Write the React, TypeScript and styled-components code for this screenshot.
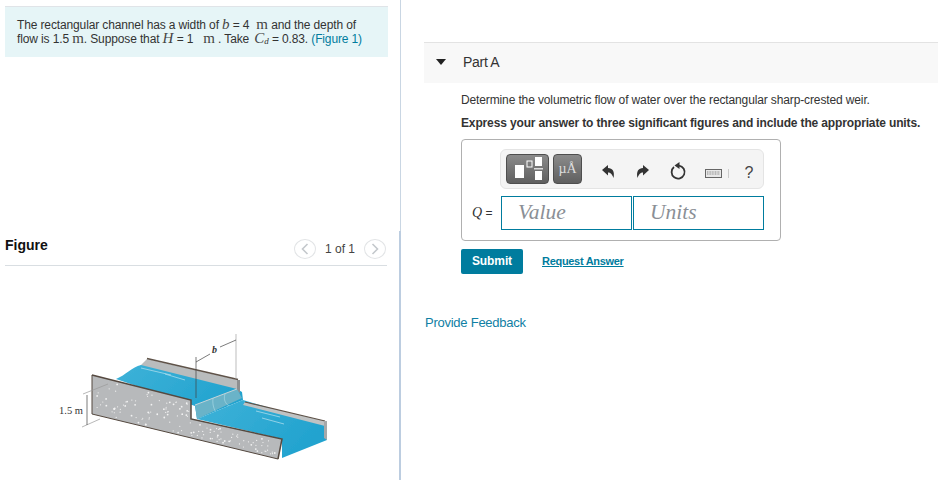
import React from "react";
import styled, { createGlobalStyle } from "styled-components";

const Global = createGlobalStyle`
  html, body { margin: 0; padding: 0; background: #fff; }
  body { font-family: "Liberation Sans", Arial, sans-serif; color: #333; overflow: hidden; }
`;
const Page = styled.div`display: flex; width: 938px; height: 480px; overflow: hidden;`;
const Left = styled.div`
  width: 399px; height: 480px; box-sizing: border-box; flex: none;
  padding: 6px 11px 0 5px;
`;
const Divider = styled.div`width: 2px; height: 480px; flex: none; display: flex; flex-direction: column;`;
const DividerTop = styled.div`height: 231px; width: 1px; margin-left: 1px; background: #c9d6e3;`;
const DividerBottom = styled.div`flex: 1; background: #bccde0;`;
const Problem = styled.div`
  height: 51px; box-sizing: border-box; background: #e6f5f7; border-top: 1px solid #e0e4e8;
  padding: 11px 12px 0; font-size: 12px; line-height: 14px; color: #333; letter-spacing: -0.13px; white-space: nowrap;
`;
const Serif = styled.span<{ $gap?: number }>`
  display: inline-block; height: 13px; line-height: 13px;
  font-family: "Liberation Serif", serif; font-size: 15px; color: #444; letter-spacing: 0;
  margin-left: ${(p) => p.$gap ?? 0}px;
`;
const MathVar = styled(Serif)`font-style: italic;`;
const Sub = styled.span`display: inline-block; height: 9px; line-height: 9px; font-size: 9px; font-style: italic; font-family: "Liberation Serif", serif; position: relative; top: 1px;`;
const TextLink = styled.span`color: #007c9e;`;
const FigureHead = styled.div`
  margin: 176px 1px 0 0; height: 33px; box-sizing: border-box; border-bottom: 1px solid #d9dee2;
  display: flex; align-items: center; justify-content: space-between; padding-bottom: 9px;
`;
const FigureTitle = styled.div`font-size: 14px; font-weight: bold; color: #111;`;
const Pager = styled.div`display: flex; align-items: center; font-size: 12px; color: #444; gap: 9px; padding-top: 8px; margin-right: 1px;`;
const PageBtn = styled.div`
  width: 22px; height: 20px; border: 1px solid #e2e4e6; border-radius: 50%; box-sizing: border-box;
  display: flex; align-items: center; justify-content: center;
`;
const FigureArt = styled.svg`display: block; margin: 66px 0 0 -5px;`;

const Right = styled.div`flex: 1; padding: 42px 0 0 23px; min-width: 0;`;
const PartHead = styled.div`
  height: 41px; box-sizing: border-box; border-top: 1px solid #e3e3e3; background: #f8f8f8;
  display: flex; align-items: center; padding: 0 0 2px 12px; gap: 17px; font-size: 14px; color: #333; letter-spacing: -0.3px;
`;
const Body = styled.div`padding: 10px 0 0 37px;`;
const Prompt = styled.div`font-size: 12px; line-height: 14px; color: #333; letter-spacing: -0.127px; white-space: nowrap;`;
const Bold = styled(Prompt)`font-weight: bold; margin-top: 9px; letter-spacing: -0.14px;`;
const AnswerCard = styled.div`
  width: 320px; height: 102px; box-sizing: border-box; margin-top: 9px;
  border: 1px solid #b0b0b0; border-radius: 4px; padding: 9px 12px 0 13px;
  display: flex; flex-direction: column;
`;
const Toolbar = styled.div`
  width: 264px; height: 40px; box-sizing: border-box; margin-left: 25px; background: #f4f4f4;
  border: 1px solid #e4e4e4; border-radius: 6px; display: flex; align-items: center; padding-left: 5px; position: relative;
`;
const Tool = styled.div<{ $w: number }>`
  width: ${(p) => p.$w}px; height: 30px; box-sizing: border-box; margin-right: 4px;
  border: 1px solid #4e4e4e; border-radius: 4px;
  background: linear-gradient(#8b8b8b, #5f5f5f);
  display: flex; align-items: center; justify-content: center; color: #ddd;
  font-family: "Liberation Serif", serif; font-size: 14px;
`;
const IconSlot = styled.svg`position: absolute; left: 90px; top: 0;`;
const Row = styled.div`display: flex; align-items: center; margin-top: 7px; margin-left: -3px;`;
const Label = styled.div`width: 29px; font-size: 12px; color: #333;`;
const QVar = styled.span`font-family: "Liberation Serif", serif; font-style: italic; font-size: 14px;`;
const Field = styled.div`
  width: 131px; height: 34px; box-sizing: border-box; margin-right: 1px; border: 1px solid #007c9e;
  font-family: "Liberation Serif", serif; font-style: italic; font-size: 21.5px; color: #8a8f96;
  padding-left: 16px; line-height: 30px;
`;
const Actions = styled.div`display: flex; align-items: center; margin-top: 8px;`;
const Submit = styled.div`
  width: 62px; height: 25px; box-sizing: border-box; padding-bottom: 2px; background: #007c9e; border-radius: 2px; color: #fff;
  font-size: 12px; font-weight: bold; display: flex; align-items: center; justify-content: center;
  letter-spacing: -0.1px;
`;
const Request = styled.div`margin: 0 0 2px 19px; font-size: 11px; font-weight: bold; color: #007c9e; text-decoration: underline; letter-spacing: -0.3px;`;
const Feedback = styled.div`margin: 41px 0 0 1px; font-size: 13px; line-height: 16px; color: #0f80a4; letter-spacing: -0.25px;`;

const speckles: [number, number][] = (() => {
  const out: [number, number][] = [];
  let s = 12345;
  const rnd = () => { s = (s * 16807) % 2147483647; return (s % 10000) / 10000; };
  for (let i = 0; i < 130; i++) {
    const x = 94 + rnd() * 184;
    const top = x < 191 ? 373 + (x - 92) * 0.25 : 417 + (x - 191) * 0.22;
    const bottom = 412 + (x - 92) * 0.24;
    const y = top + 3 + rnd() * (bottom - top - 5);
    out.push([x, y]);
  }
  return out;
})();

const Figure = () => (
  <FigureArt width="388" height="150" viewBox="0 330 388 150">
    <defs>
      <filter id="soft"><feGaussianBlur stdDeviation="0.45" /></filter>
      <linearGradient id="water" x1="0" y1="0" x2="1" y2="0.4">
        <stop offset="0" stopColor="#3eb2d8" />
        <stop offset="1" stopColor="#22a3cf" />
      </linearGradient>
    </defs>
    <g filter="url(#soft)">
      <polygon points="147,357 238,378 238,390 140,364" fill="#b9bcbd" />
      <path d="M116,377 C126,373 132,365 141,363 L237,387 L242,390 L243,398 L197,417 L195,404 Z" fill="url(#water)" />
      <polyline points="147,356.5 238,377.5" stroke="#5e5248" strokeWidth="1.6" fill="none" />
      <polygon points="237,378 240,378 240,391 237,389" fill="#8d8f90" />
      <polygon points="195,403 237,387 242,396 197,417" fill="#6ab3c8" />
      <line x1="195" y1="403" x2="237" y2="387" stroke="#c6d4d8" strokeWidth="1" />
      <path d="M213,396 C212,404 215,410 218,412 M225,392 C223,398 226,402 229,404" stroke="#a8d8e4" strokeWidth="0.7" fill="none" />
      <path d="M243,398 L325,422 L327,438 L282,456 L282,437 L197,417 Z" fill="url(#water)" />
      <polygon points="245,400 325,419 325,424 243,403" fill="#bfc2c3" />
      <polyline points="245,400 325,419" stroke="#5e5248" strokeWidth="1.2" fill="none" />
      <polygon points="324,419 327,419 327,438 324,436" fill="#a6a8a9" />
      <polygon points="92,373 191,398 191,417 282,437 278,457 92,412" fill="#b7b9bb" />
      <polyline points="92,373 191,398 191,417 282,437 278,457" stroke="#54483f" strokeWidth="1.5" fill="none" />
      <polyline points="92,373 92,412 278,457" stroke="#54483f" strokeWidth="1" fill="none" />
      {speckles.map(([x, y], i) => (
        <circle key={i} cx={x} cy={y} r={i % 3 === 0 ? 0.9 : 0.6} fill="#f2f2f2" />
      ))}
      <g strokeWidth="0.7" fill="none">
        <line x1="196" y1="355" x2="196" y2="396" stroke="#444" />
        <line x1="236" y1="332" x2="236" y2="377" stroke="#a0a0a0" />
        <line x1="196" y1="360" x2="210" y2="352" stroke="#444" />
        <line x1="220" y1="345" x2="236" y2="338" stroke="#444" />
        <line x1="83" y1="392" x2="108" y2="382" stroke="#999" />
        <line x1="82" y1="425" x2="100" y2="417" stroke="#999" />
        <line x1="87" y1="393" x2="87" y2="423" stroke="#444" />
      </g>
      <path d="M141,366 l30,7 M165,372 l20,6 M256,409 l24,6 M262,416 l22,6" stroke="#a9dcec" strokeWidth="0.8" fill="none" />
    </g>
    <text x="212" y="351" fontFamily="Liberation Serif, serif" fontStyle="italic" fontWeight="bold" fontSize="10" fill="#333">b</text>
    <text x="59" y="412" fontFamily="Liberation Serif, serif" fontSize="10.5" fill="#333">1.5 m</text>
  </FigureArt>
);

export default function App() {
  return (
    <Page>
      <Global />
      <Left>
        <Problem>
          The rectangular channel has a width of <MathVar>b</MathVar> = 4 <Serif>&nbsp;m</Serif> and the depth of<br />
          flow is 1.5 <Serif>m</Serif>. Suppose that <MathVar>H</MathVar> = 1 <Serif $gap={3}>&nbsp;m</Serif> . Take <MathVar $gap={2}>C</MathVar><Sub>d</Sub> = 0.83. <TextLink>(Figure 1)</TextLink>
        </Problem>
        <FigureHead>
          <FigureTitle>Figure</FigureTitle>
          <Pager>
            <PageBtn>
              <svg width="8" height="12" viewBox="0 0 8 12"><path d="M6.5 1 L1.5 6 L6.5 11" fill="none" stroke="#c4c8cc" strokeWidth="1.6" /></svg>
            </PageBtn>
            <span>1 of 1</span>
            <PageBtn>
              <svg width="8" height="12" viewBox="0 0 8 12"><path d="M1.5 1 L6.5 6 L1.5 11" fill="none" stroke="#c4c8cc" strokeWidth="1.6" /></svg>
            </PageBtn>
          </Pager>
        </FigureHead>
        <Figure />
      </Left>
      <Divider>
        <DividerTop />
        <DividerBottom />
      </Divider>
      <Right>
        <PartHead>
          <svg width="10" height="6" viewBox="0 0 10 6"><path d="M0 0 H10 L5 6 Z" fill="#222" /></svg>
          <span>Part A</span>
        </PartHead>
        <Body>
          <Prompt>Determine the volumetric flow of water over the rectangular sharp-crested weir.</Prompt>
          <Bold>Express your answer to three significant figures and include the appropriate units.</Bold>
          <AnswerCard>
            <Toolbar>
              <Tool $w={43}>
                <svg width="36" height="26" viewBox="0 0 36 26">
                  <rect x="5" y="9" width="9" height="13" fill="#fff" />
                  <rect x="17" y="5" width="5" height="6" fill="none" stroke="#fff" strokeWidth="1" />
                  <rect x="25" y="1" width="7" height="9" fill="#fff" />
                  <rect x="24" y="12" width="9" height="1.5" fill="#ddd" />
                  <rect x="25" y="15" width="7" height="9" fill="#fff" />
                </svg>
              </Tool>
              <Tool $w={29}>µÅ</Tool>
              <IconSlot width="170" height="38" viewBox="0 0 170 38">
                <path d="M11 20 L17 15 V18 C21.5 18 24 21.5 22.5 28 C21 24 19.5 22.5 17 22.5 V25.5 Z" fill="#333" />
                <path d="M58 20 L52 15 V18 C47.5 18 45 21.5 46.5 28 C48 24 49.5 22.5 52 22.5 V25.5 Z" fill="#333" />
                <path d="M83 17 A6.5 6.5 0 1 0 88 15.6" fill="none" stroke="#333" strokeWidth="1.8" />
                <path d="M88.5 12 V19 L83.5 15.5 Z" fill="#333" />
                <rect x="114.5" y="19.5" width="16" height="8" fill="#e8e8e8" stroke="#666" strokeWidth="1" />
                <path d="M116 22 H129 M116 24 H129" stroke="#888" strokeWidth="1" strokeDasharray="1 0.6" />
                <line x1="137.5" y1="19" x2="137.5" y2="28" stroke="#ccc" />
                <text x="153.5" y="28" fontFamily="Liberation Sans, sans-serif" fontSize="16" fill="#444">?</text>
              </IconSlot>
            </Toolbar>
            <Row>
              <Label><QVar>Q</QVar> =</Label>
              <Field>Value</Field>
              <Field>Units</Field>
            </Row>
          </AnswerCard>
          <Actions>
            <Submit>Submit</Submit>
            <Request>Request Answer</Request>
          </Actions>
        </Body>
        <Feedback>Provide Feedback</Feedback>
      </Right>
    </Page>
  );
}
